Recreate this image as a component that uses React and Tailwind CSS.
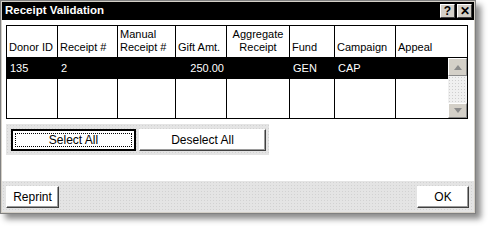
import React from 'react';

const cols = [
    { head: ['Donor ID'], val: '135', w: 'w-[51px]' },
    { head: ['Receipt #'], val: '2', w: 'w-[60px]' },
    { head: ['Manual', 'Receipt #'], val: '', w: 'w-[58px]' },
    { head: ['Gift Amt.'], val: '250.00', w: 'w-[51px]', right: true },
    { head: ['Aggregate', 'Receipt'], val: '', w: 'w-[63px]', center: true },
    { head: ['Fund'], val: 'GEN', w: 'w-[45px]' },
    { head: ['Campaign'], val: 'CAP', w: 'w-[61px]' },
];

const stipple = 'bg-[#e4e4e4] bg-[radial-gradient(#d2d2d2_0.6px,transparent_0.8px)] bg-[length:3px_3px]';

const TitleButton = ({ children }) => (
    <div className="w-[15px] h-[14px] bg-[#d4d0c8] border border-t-white border-l-white border-b-[#404040] border-r-[#404040] flex items-center justify-center text-[12px] font-bold leading-none text-black">
        {children}
    </div>
);

const Button = ({ label, className = '' }) => (
    <button
        type="button"
        className={`h-[22px] bg-white border border-t-white border-l-white border-b-[#404040] border-r-[#404040] shadow-[inset_-1px_-1px_0_#9a9a9a] text-[12px] text-black ${className}`}
    >
        {label}
    </button>
);

export default function App() {
    return (
        <div className="w-[494px] h-[230px] bg-white" style={{ fontFamily: '"Liberation Sans", Arial, sans-serif' }}>
            <div className="w-[476px] h-[214px] border border-[#808080] bg-[#d4d0c8] p-[1px] shadow-[5px_5px_6px_rgba(0,0,0,0.45)] flex flex-col">
                {/* title bar */}
                <div className="h-[18px] bg-black flex items-center justify-between pl-[3px] pr-[2px]">
                    <span className="text-white font-bold text-[11.5px] leading-none">Receipt Validation</span>
                    <div className="flex gap-[2px]">
                        <TitleButton>?</TitleButton>
                        <TitleButton>✕</TitleButton>
                    </div>
                </div>

                {/* body */}
                <div className="flex-1 bg-white flex flex-col pl-[4px] pr-[5px] pt-[5px]">
                    <div className="w-[462px] border border-black text-[11px] text-black">
                        {/* header */}
                        <div className="flex h-[32px] border-b border-black">
                            {cols.map((c, i) => (
                                <div
                                    key={i}
                                    className={`${c.w} border-r border-black flex flex-col justify-end pb-[3px] px-[2px] leading-[13px] ${c.center ? 'items-center' : ''}`}
                                >
                                    {c.head.map((h, j) => (
                                        <span key={j} className="whitespace-nowrap">{h}</span>
                                    ))}
                                </div>
                            ))}
                            <div className="flex-1 flex flex-col justify-end pb-[3px] px-[2px] leading-[13px]">Appeal</div>
                        </div>
                        {/* rows + scrollbar */}
                        <div className="flex">
                            <div className="flex flex-col">
                                <div className="flex h-[21px] bg-black text-white">
                                    {cols.map((c, i) => (
                                        <div
                                            key={i}
                                            className={`${c.w} flex items-center px-[3px] ${c.right ? 'justify-end' : ''}`}
                                        >
                                            {c.val}
                                        </div>
                                    ))}
                                    <div className="w-[52px]" />
                                </div>
                                <div className="flex h-[39px]">
                                    {cols.map((c, i) => (
                                        <div key={i} className={`${c.w} border-r border-black`} />
                                    ))}
                                    <div className="w-[52px]" />
                                </div>
                            </div>
                            <div className="w-[19px] flex flex-col bg-[#f0f0f0] bg-[radial-gradient(#cfcfcf_0.6px,transparent_0.8px)] bg-[length:3px_3px]">
                                <div className="h-[18px] bg-[#d4d0c8] border border-t-white border-l-white border-b-[#8a8a8a] border-r-[#8a8a8a] flex items-center justify-center">
                                    <svg width="8" height="5" viewBox="0 0 8 5"><path d="M4 0 L8 5 L0 5 Z" fill="#8c8c8c" /></svg>
                                </div>
                                <div className="flex-1" />
                                <div className="h-[15px] bg-[#d4d0c8] border border-t-white border-l-white border-b-[#8a8a8a] border-r-[#8a8a8a] flex items-center justify-center">
                                    <svg width="8" height="5" viewBox="0 0 8 5"><path d="M0 0 L8 0 L4 5 Z" fill="#8c8c8c" /></svg>
                                </div>
                            </div>
                        </div>
                    </div>

                    {/* select buttons */}
                    <div className={`mt-[5px] w-[263px] h-[31px] ${stipple} flex items-center gap-[3px] pl-[5px]`}>
                        <button
                            type="button"
                            className="w-[125px] h-[22px] bg-white border-2 border-black p-[2px] text-[12px] text-black"
                        >
                            <div className="w-full h-full border border-dotted border-black flex items-center justify-center">Select All</div>
                        </button>
                        <Button label="Deselect All" className="w-[127px]" />
                    </div>
                    <div className="flex-1" />
                </div>

                {/* footer */}
                <div className={`h-[31px] ${stipple} flex items-center justify-between pl-[4px] pr-[5px]`}>
                    <Button label="Reprint" className="w-[53px]" />
                    <Button label="OK" className="w-[52px]" />
                </div>
            </div>
        </div>
    );
}
